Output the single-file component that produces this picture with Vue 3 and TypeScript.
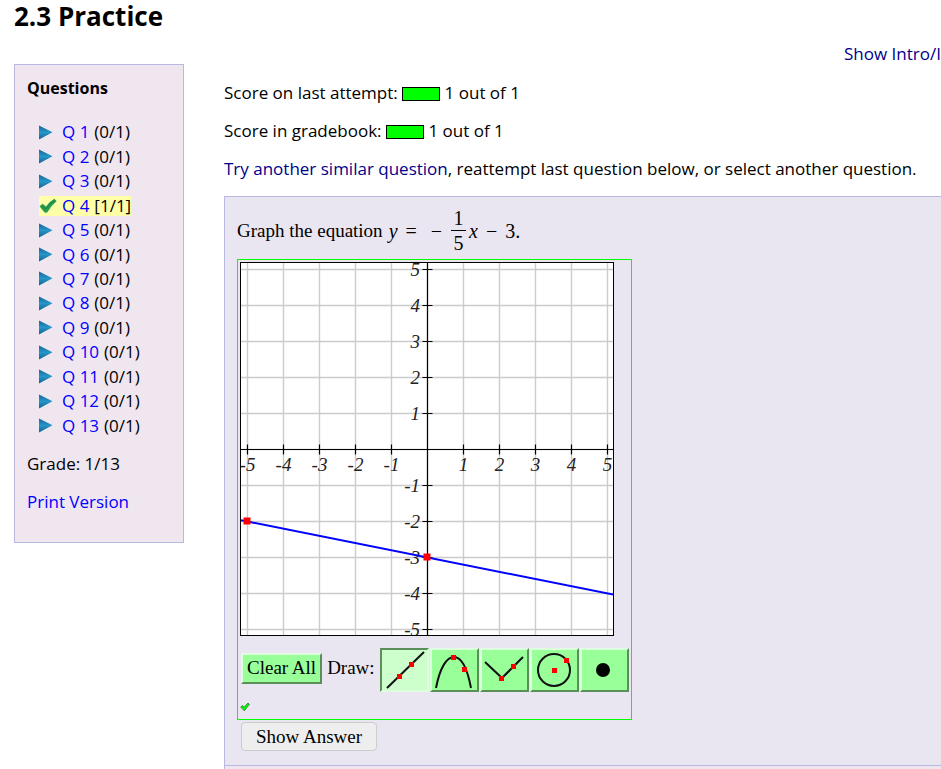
<script setup lang="ts">
import { ref } from 'vue'

interface Question {
  id: number
  earned: number
  possible: number
}

const questions: Question[] = Array.from({ length: 13 }, (_, i) => ({
  id: i + 1,
  earned: i === 3 ? 1 : 0,
  possible: 1,
}))
const current = 4

const tools = ['Line', 'Parabola', 'Absolute value', 'Circle', 'Point']
const activeTool = ref('Line')

const origin = 186.5
const unit = 36
const ticks = [-5, -4, -3, -2, -1, 0, 1, 2, 3, 4, 5]
const labels = ticks.filter((n) => n !== 0)
const px = (x: number): number => origin + x * unit
const py = (y: number): number => origin - y * unit
const f = (x: number): number => -x / 5 - 3
const points = [-5, 0]
</script>

<template>
  <div class="page">
    <h1 class="title">2.3 Practice</h1>
    <div class="intro"><a href="#">Show Intro/I</a></div>
    <div class="layout">
      <nav class="sidebar" aria-label="Questions">
        <h2 class="heading">Questions</h2>
        <ul class="list">
          <li v-for="q in questions" :key="q.id">
            <span class="entry" :class="{ current: q.id === current }">
              <span class="mark">
                <svg v-if="q.id === current" width="18" height="16" viewBox="0 0 18 16" aria-hidden="true">
                  <path d="M.5 8.2 3.6 5.8 7 8.6Q10.5 3.4 15.4.8L17.6 3.2Q12 7.6 8.2 14.4L5.8 14.8Q3 11.4.5 8.2Z" fill="#2a9d4e" />
                  <path d="M3 8 6.5 11.4Q10.5 5.4 15.5 2.4" fill="none" stroke="#1b8340" stroke-width="1" />
                </svg>
                <svg v-else width="14" height="15" viewBox="0 0 14 15" aria-hidden="true">
                  <defs>
                    <linearGradient :id="`arrow${q.id}`" x1="0" y1="0" x2="0" y2="1">
                      <stop offset="0" stop-color="#1a6499" />
                      <stop offset=".5" stop-color="#2496c8" />
                      <stop offset="1" stop-color="#155f92" />
                    </linearGradient>
                  </defs>
                  <path d="M0 .5 13.5 7.2 0 14.5Z" :fill="`url(#arrow${q.id})`" />
                </svg>
              </span>
              <a href="#">Q {{ q.id }}</a>
              <span v-if="q.id === current">[{{ q.earned }}/{{ q.possible }}]</span>
              <span v-else>({{ q.earned }}/{{ q.possible }})</span>
            </span>
          </li>
        </ul>
        <p>Grade: 1/13</p>
        <p><a href="#">Print Version</a></p>
      </nav>

      <main class="main">
        <p class="score">Score on last attempt: <span class="bar"></span> 1 out of 1</p>
        <p class="score">Score in gradebook: <span class="bar"></span> 1 out of 1</p>
        <p class="notice">
          <a href="#">Try another similar question</a>, reattempt last question below, or select another question.
        </p>

        <section class="question">
          <div class="prompt">
            <span>Graph the equation</span>
            <span class="math">
              <i>y</i><span class="op">=</span><span class="op neg">−</span>
              <span class="frac"><span>1</span><span>5</span></span>
              <i>x</i><span class="op minus">−</span><span>3.</span>
            </span>
          </div>

          <div class="answer">
            <svg class="graph" width="374" height="374" viewBox="-1 -1 374 374" role="img" aria-label="Coordinate grid">
              <rect x="-.5" y="-.5" width="373" height="373" fill="#fff" />
              <g stroke="#ccc" stroke-width="1.4">
                <path v-for="n in ticks" :key="n" :d="`M${px(n)} 0V372M0 ${py(n)}H372`" />
              </g>
              <g stroke="#000" stroke-width="1.2">
                <path :d="`M${origin} 0V372M0 ${origin}H372`" />
                <path v-for="n in labels" :key="n" :d="`M${px(n)} ${origin - 5}v10M${origin - 5} ${py(n)}h10`" />
              </g>
              <svg x="0" y="0" width="372" height="372">
                <g class="tick-labels">
                  <text v-for="n in labels" :key="`x${n}`" :x="px(n)" y="208" text-anchor="middle">{{ n }}</text>
                  <text v-for="n in labels" :key="`y${n}`" x="179" :y="py(n) + 6" text-anchor="end">{{ n }}</text>
                </g>
                <path :d="`M${px(-6)} ${py(f(-6))}L${px(6)} ${py(f(6))}`" stroke="#00f" stroke-width="2" />
                <rect v-for="x in points" :key="x" :x="px(x) - 4" :y="py(f(x)) - 4" width="7" height="7" fill="#f00" />
              </svg>
              <rect x="-.5" y="-.5" width="373" height="373" fill="none" stroke="#000" />
            </svg>

            <div class="toolbar">
              <button type="button" class="clear">Clear All</button>
              <span class="draw">Draw:</span>
              <span class="tools">
                <button
                  v-for="t in tools"
                  :key="t"
                  type="button"
                  class="tool"
                  :class="{ active: t === activeTool }"
                  :aria-label="t"
                  :aria-pressed="t === activeTool"
                  @click="activeTool = t"
                >
                  <svg width="45" height="40" viewBox="0 0 45 40" fill="none" stroke="#111" stroke-width="2">
                    <template v-if="t === 'Line'">
                      <path d="M5 38 42 2" />
                      <path d="M15 24h5v5h-5zM27 12h5v5h-5z" fill="#f00" stroke="none" />
                    </template>
                    <template v-else-if="t === 'Parabola'">
                      <path d="M4 38C8 17 15 7 22 7S35 17 39 38" />
                      <path d="M19 5h5v5h-5zM30 17h5v5h-5z" fill="#f00" stroke="none" />
                    </template>
                    <template v-else-if="t === 'Absolute value'">
                      <path d="M3 12 20 28 41 7" />
                      <path d="M17 26h5v5h-5zM29 14h5v5h-5z" fill="#f00" stroke="none" />
                    </template>
                    <template v-else-if="t === 'Circle'">
                      <circle cx="22" cy="20" r="16" />
                      <path d="M20 18h5v5h-5zM32 8h5v5h-5z" fill="#f00" stroke="none" />
                    </template>
                    <circle v-else cx="21" cy="20" r="7" fill="#000" stroke="none" />
                  </svg>
                </button>
              </span>
            </div>

            <svg class="result" width="10" height="10" viewBox="0 0 10 10" role="img" aria-label="Correct">
              <path d="M.7 5 2.5 3.6 4 5.3 8 1 9.4 2.3 4.3 8.8Z" fill="#0f0" stroke="#287a28" stroke-width=".8" />
            </svg>
          </div>
          <button type="button" class="show">Show Answer</button>
        </section>
        <div class="footer-strip"></div>
      </main>
    </div>
  </div>
</template>

<style>
body {
  margin: 0;
  background: #fff;
  overflow: hidden;
}
</style>

<style scoped>
.page {
  box-sizing: border-box;
  min-height: 100vh;
  padding-left: 14px;
  font: 17px/20px "Trebuchet MS", "Open Sans", sans-serif;
  color: #000;
}
h1,
h2,
p,
ul {
  margin: 0;
  padding: 0;
}
a {
  text-decoration: none;
  color: #00f;
}
.title {
  font-size: 26px;
  line-height: 32px;
}
.intro {
  display: flex;
  justify-content: flex-end;
  padding-top: 12px;
}
.intro a,
.notice a {
  color: #00008b;
}
.layout {
  display: flex;
  align-items: flex-start;
  gap: 40px;
}
.sidebar {
  box-sizing: border-box;
  flex: 0 0 170px;
  display: flex;
  flex-direction: column;
  gap: 18px;
  padding: 13px 12px 30px;
  border: 1px solid #b8b8e0;
  background: #f0e6ef;
}
.heading {
  font-size: 16px;
  line-height: 20px;
}
.list {
  display: grid;
  grid-auto-rows: 1fr;
  align-items: center;
  height: 318px;
  padding: 4px 0 0 12px;
  list-style: none;
}
.list + p {
  margin-top: -2px;
}
.list li {
  display: flex;
}
.entry {
  display: flex;
  align-items: center;
  gap: 5px;
}
.entry.current {
  background: #ffffa8;
}
.mark {
  display: flex;
  width: 18px;
}
.main {
  flex: 1;
  min-width: 0;
  display: flex;
  flex-direction: column;
  gap: 18px;
  padding-top: 19px;
  white-space: nowrap;
}
.bar {
  display: inline-block;
  box-sizing: border-box;
  width: 38px;
  height: 14px;
  border: 1px solid #000;
  background: #0f0;
  vertical-align: -2px;
}
.question {
  display: flex;
  flex-direction: column;
  align-items: flex-start;
  margin-top: -1px;
  padding: 11px 12px 14px;
  border: 1px solid #b8b8e0;
  border-right: 0;
  background: #e9e6f1;
  font: 19px/24px "Liberation Serif", serif;
}
.prompt {
  box-sizing: border-box;
  display: flex;
  align-items: center;
  gap: 6px;
  height: 51px;
  padding-bottom: 6px;
}
.math {
  display: flex;
  align-items: center;
  font-size: 20px;
}
.op {
  margin-left: 8px;
}
.neg {
  margin: 0 9px 0 14px;
}
.minus {
  margin: 0 8px;
}
.frac {
  display: flex;
  flex-direction: column;
  align-items: center;
  width: 15px;
  margin-right: 3px;
}
.frac span:first-child {
  align-self: stretch;
  text-align: center;
  border-bottom: 1px solid #000;
}
.answer {
  display: flex;
  flex-direction: column;
  align-items: flex-start;
  padding: 2px;
  border: 1px solid #0f0;
}
.graph {
  display: block;
}
.tick-labels {
  font: italic 19px "Liberation Serif", serif;
  fill: #222;
}
.toolbar {
  display: flex;
  align-items: center;
  gap: 5px;
  padding: 12px 0 0 1px;
}
.clear,
.draw {
  margin: 0 0 4px;
}
.clear {
  height: 31px;
  padding: 0 4px;
  border: 2px solid;
  border-color: #dfd #5a8f5a #5a8f5a #dfd;
  background: #9f9;
  font: inherit;
  color: #000;
}
.tools {
  display: flex;
  gap: 1px;
}
.tool {
  display: flex;
  padding: 0;
  border: 2px solid;
  border-color: #dfd #5a8f5a #5a8f5a #dfd;
  background: #9f9;
}
.tool.active {
  border-color: #5a8f5a #dfd #dfd #5a8f5a;
  background: #cfc;
}
.result {
  margin: 10px 0 5px;
}
.show {
  height: 29px;
  margin: 2px 0 0 4px;
  padding: 0 14px;
  border: 1px solid #ccc;
  border-radius: 4px;
  background: #eee;
  font: inherit;
  color: #000;
}
.footer-strip {
  height: 10px;
  margin-top: -18px;
  border-left: 1px solid #b8b8e0;
  background: #efe6ef;
}
</style>
